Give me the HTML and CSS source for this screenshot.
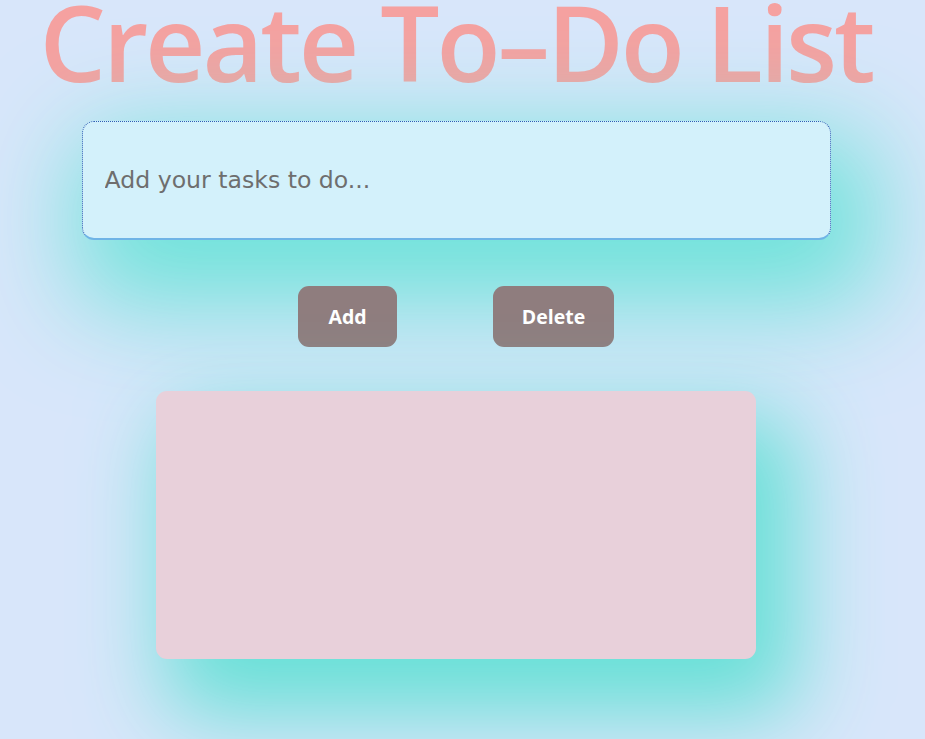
FILE: index.html
```html
<!DOCTYPE html>
<html lang="en">
<head>
<meta charset="utf-8">
<title>Create To-Do List</title>
<link rel="stylesheet" href="styles.css">
</head>
<body>
<main class="page">
  <header class="title-wrap">
    <h1 class="title">Create To–Do List</h1>
  </header>
  <div class="task-input">
    <input class="task-field" type="text" placeholder="Add your tasks to do...">
  </div>
  <div class="actions">
    <button class="btn btn-add" type="button">Add</button>
    <button class="btn btn-delete" type="button">Delete</button>
  </div>
  <ul class="task-list"></ul>
</main>
</body>
</html>
```

FILE: styles.css
```css
html, body {
  margin: 0;
  padding: 0;
}
body {
  background: #d8e6fa;
  font-family: "Open Sans", "DejaVu Sans", sans-serif;
  height: 739px;
  overflow: hidden;
}
.page {
  width: 912px;
  display: flex;
  flex-direction: column;
  align-items: center;
}
.title-wrap {
  height: 121px;
  display: flex;
  align-items: flex-start;
}
.title {
  margin: 0;
  font-family: "Open Sans", sans-serif;
  font-weight: 600;
  font-size: 105px;
  line-height: 105px;
  margin-top: -11px;
  letter-spacing: -3.1px;
  color: rgba(255, 136, 128, 0.74);
  white-space: nowrap;
}
.task-input {
  width: 749px;
  height: 119px;
  box-sizing: border-box;
  background: #d3f1fb;
  border: 1px dotted #2f5fb5;
  border-bottom: 2px solid #6fb4e6;
  border-radius: 12px;
  box-shadow: 20px 40px 100px 25px #6fe3da;
  display: flex;
  align-items: center;
}
.task-field {
  width: 100%;
  border: none;
  background: transparent;
  outline: none;
  padding: 0 0 0 22px;
  font-family: "DejaVu Sans", sans-serif;
  font-size: 23.6px;
  color: #666;
}
.task-field::placeholder {
  color: #6e6e6e;
}
.actions {
  margin-top: 46px;
  display: flex;
  gap: 96px;
}
.btn {
  height: 61px;
  border: none;
  border-radius: 11px;
  background: #8f7d7e;
  color: #fff;
  font-family: "Open Sans", sans-serif;
  font-weight: 700;
  font-size: 19.5px;
  padding: 0;
}
.btn-add { width: 99px; }
.btn-delete { width: 121px; }
.task-list {
  margin: 44px 0 0;
  padding: 0;
  list-style: none;
  width: 600px;
  height: 268px;
  background: #e8d0da;
  border-radius: 11px;
  box-shadow: 25px 40px 85px 15px #66e0d6;
}
```
